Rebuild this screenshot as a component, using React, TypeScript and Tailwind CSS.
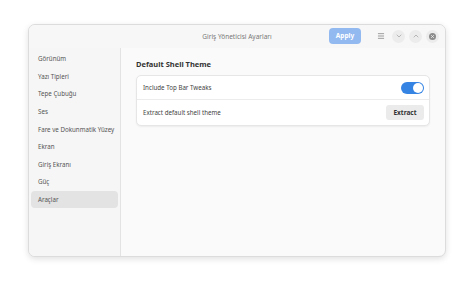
import { Menu, ChevronDown, ChevronUp, X } from "lucide-react";

const items = [
  "Görünüm",
  "Yazı Tipleri",
  "Tepe Çubuğu",
  "Ses",
  "Fare ve Dokunmatik Yüzey",
  "Ekran",
  "Giriş Ekranı",
  "Güç",
  "Araçlar",
];

export default function App() {
  return (
    <div className="w-[474px] h-[288px] bg-white pt-[24px] pl-[28px] font-['Noto_Sans',sans-serif]">
      <div className="w-[418px] h-[233px] rounded-[7px] bg-[#fafafa] border border-[#dcdcdc] shadow-[0_2px_6px_rgba(0,0,0,0.12)] flex flex-col overflow-hidden">
        {/* header bar */}
        <div className="h-[23px] shrink-0 bg-[#f7f7f7] flex items-center relative">
          <div className="flex-1 text-center text-[6.5px] text-[#777]">Giriş Yöneticisi Ayarları</div>
          <div className="absolute right-[6px] top-[3px] flex items-center gap-[2px]">
            <button className="w-[32px] h-[16px] rounded-[4px] bg-[#92b9f0] text-white text-[6.5px] font-bold mr-[10px]">
              Apply
            </button>
            <span className="w-[15px] h-[15px] flex items-center justify-center">
              <Menu className="w-[8px] h-[8px] text-[#8a8a8a]" strokeWidth={2.5} />
            </span>
            <span className="w-[13px] h-[13px] rounded-full bg-[#ececec] flex items-center justify-center ml-[2px]">
              <ChevronDown className="w-[8px] h-[8px] text-[#9a9a9a]" strokeWidth={2} />
            </span>
            <span className="w-[13px] h-[13px] rounded-full bg-[#ececec] flex items-center justify-center ml-[2px]">
              <ChevronUp className="w-[8px] h-[8px] text-[#9a9a9a]" strokeWidth={2} />
            </span>
            <span className="w-[13px] h-[13px] rounded-full bg-[#ececec] flex items-center justify-center ml-[2px]">
              <span className="w-[7px] h-[7px] rounded-full bg-[#8c8c8c] flex items-center justify-center">
                <X className="w-[5px] h-[5px] text-white" strokeWidth={3} />
              </span>
            </span>
          </div>
        </div>
        <div className="flex flex-1 min-h-0">
          {/* sidebar */}
          <div className="w-[92px] shrink-0 bg-[#f6f6f6] border-r border-[#e3e3e3] px-[2px] pt-[2px]">
            {items.map((it) => (
              <div
                key={it}
                className={
                  "h-[17.6px] flex items-center pl-[7px] rounded-[4px] text-[6.2px] text-[#555] whitespace-nowrap " +
                  (it === "Araçlar" ? "bg-[#e3e3e3]" : "")
                }
              >
                {it}
              </div>
            ))}
          </div>
          {/* content */}
          <div className="flex-1 pt-[11px] pl-[15px] pr-[15px]">
            <div className="text-[7.5px] font-bold text-[#333] mb-[5px]">Default Shell Theme</div>
            <div className="rounded-[5px] bg-white border border-[#e6e6e6] shadow-[0_1px_2px_rgba(0,0,0,0.06)]">
              <div className="h-[24px] flex items-center justify-between pl-[6px] pr-[5px] border-b border-[#ececec]">
                <span className="text-[6.2px] text-[#444]">Include Top Bar Tweaks</span>
                <span className="w-[23px] h-[12px] rounded-full bg-[#3584e4] flex items-center justify-end pr-[1px]">
                  <span className="w-[10px] h-[10px] rounded-full bg-white" />
                </span>
              </div>
              <div className="h-[25px] flex items-center justify-between pl-[6px] pr-[5px]">
                <span className="text-[6.2px] text-[#444]">Extract default shell theme</span>
                <button className="w-[38px] h-[15px] rounded-[3px] bg-[#ebebeb] text-[6.5px] font-bold text-[#333]">
                  Extract
                </button>
              </div>
            </div>
          </div>
        </div>
      </div>
    </div>
  );
}
